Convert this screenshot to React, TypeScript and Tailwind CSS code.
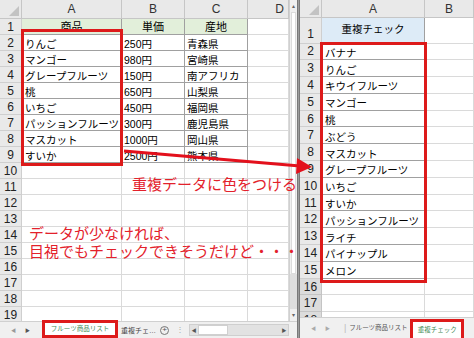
import React from "react"

const font = "font-['Liberation_Sans','Noto_Sans_CJK_JP',sans-serif]"

const leftRows: [string, string, string][] = [
  ["りんご", "250円", "青森県"],
  ["マンゴー", "980円", "宮崎県"],
  ["グレープフルーツ", "150円", "南アフリカ"],
  ["桃", "650円", "山梨県"],
  ["いちご", "450円", "福岡県"],
  ["パッションフルーツ", "300円", "鹿児島県"],
  ["マスカット", "1000円", "岡山県"],
  ["すいか", "2500円", "熊本県"],
]

const rightRows = [
  "バナナ",
  "りんご",
  "キウイフルーツ",
  "マンゴー",
  "桃",
  "ぶどう",
  "マスカット",
  "グレープフルーツ",
  "いちご",
  "すいか",
  "パッションフルーツ",
  "ライチ",
  "パイナップル",
  "メロン",
]

function Corner() {
  return (
    <div className="relative bg-[#e9e9e9] border-r border-b border-[#c6c6c6]">
      <div className="absolute right-[2px] bottom-[2px] w-0 h-0 border-l-[10px] border-l-transparent border-b-[10px] border-b-[#c3c3c3]" />
    </div>
  )
}

function ColHead({ label, right }: { label: string; right?: boolean }) {
  return (
    <div
      className={`flex items-center ${right ? "justify-end pr-[4px]" : "justify-center"} bg-[#e9e9e9] border-r border-b border-[#c6c6c6] text-[12px] text-[#333]`}
    >
      {label}
    </div>
  )
}

function RowHead({ n }: { n: number }) {
  return (
    <div className="flex items-center justify-center bg-[#e9e9e9] border-r border-b border-[#cfcfcf] text-[12px] leading-none text-[#222]">
      {n}
    </div>
  )
}

function LeftPane() {
  return (
    <div className="flex flex-col w-[297px] h-full">
      <div className="flex h-[321px] overflow-hidden">
        <div className="grid grid-cols-[22px_100px_63px_63px_41px] grid-rows-[19px_repeat(19,16px)] w-[289px] bg-white">
          <Corner />
          <ColHead label="A" />
          <ColHead label="B" />
          <ColHead label="C" />
          <ColHead label="D" right />
          <RowHead n={1} />
          {["商品", "単価", "産地"].map((t) => (
            <div
              key={t}
              className="flex items-end justify-center pb-[1px] bg-[#e2efda] border-r border-b border-[#a0a0a0] text-[11px] leading-none text-black"
            >
              {t}
            </div>
          ))}
          <div className="border-r border-b border-[#dadada]" />
          {leftRows.map((r, i) => (
            <React.Fragment key={i}>
              <RowHead n={i + 2} />
              {r.map((t, j) => (
                <div
                  key={j}
                  className={`flex items-end ${j === 0 ? "pl-[3px]" : "pl-[2px]"} pb-[1px] border-r border-b border-[#a0a0a0] text-[10.5px] leading-none text-black whitespace-nowrap overflow-hidden`}
                >
                  {t}
                </div>
              ))}
              <div className="border-r border-b border-[#dadada]" />
            </React.Fragment>
          ))}
          {Array.from({ length: 10 }).map((_, i) => (
            <React.Fragment key={i}>
              <RowHead n={i + 10} />
              <div className="border-r border-b border-[#dadada]" />
              <div className="border-r border-b border-[#dadada]" />
              <div className="border-r border-b border-[#dadada]" />
              <div className="border-r border-b border-[#dadada]" />
            </React.Fragment>
          ))}
        </div>
        <div className="flex flex-col w-[8px] bg-[#f0f0f0] border-l border-[#d0d0d0]">
          <div className="flex items-center justify-center h-[12px] text-[6px] leading-none text-[#666]">▴</div>
          <div className="h-[262px] mx-[1px] bg-white border border-[#dcdcdc]" />
          <div className="flex-1 bg-[#dedede]" />
          <div className="flex items-center justify-center h-[12px] text-[6px] leading-none text-[#666]">▾</div>
        </div>
      </div>
      <div className="flex items-stretch h-[17px] bg-[#f0f0f0] border-t border-[#d0d0d0] text-[6.5px] leading-none">
        <div className="flex items-center gap-[9px] w-[42px] pl-[11px] text-[5px] text-[#9a9a9a]">
          <span>◀</span>
          <span className="text-[#555]">▶</span>
        </div>
        <div className="flex items-center justify-center w-[76px] h-[18px] -mt-[2px] bg-white border-[3px] border-[#dd1a1a] text-[#3f8a56] whitespace-nowrap">
          フルーツ商品リスト
        </div>
        <div className="flex items-center pl-[3px] w-[42px] text-[7px] text-[#444] whitespace-nowrap overflow-hidden">
          重複チェ…
        </div>
        <div className="flex items-center">
          <span className="flex items-center justify-center w-[9px] h-[9px] rounded-full border border-[#777] text-[8px] text-[#555]">
            +
          </span>
        </div>
        <div className="flex items-center pl-[7px] pr-[5px] text-[8px] text-[#aaa]">⋮</div>
        <div className="flex items-center flex-1 my-[2px] bg-[#e2e2e2] border border-[#cfcfcf]">
          <span className="w-[8px] text-center text-[5px] text-[#555]">◀</span>
          <span className="w-[30px] h-full bg-white border border-[#d0d0d0]" />
          <span className="flex-1" />
          <span className="w-[8px] text-center text-[5px] text-[#555]">▶</span>
        </div>
        <div className="w-[8px]" />
      </div>
    </div>
  )
}

function RightPane() {
  return (
    <div className="flex flex-col flex-1 h-full">
      <div className="h-[317px] overflow-hidden">
        <div className="grid grid-cols-[22px_103px_49px] grid-rows-[18px_25.5px_repeat(17,16.8px)] bg-white">
          <Corner />
          <ColHead label="A" />
          <ColHead label="B" />
          <div className="flex items-end justify-center pb-[3px] bg-[#e9e9e9] border-r border-b border-[#cfcfcf] text-[12px] leading-none text-[#222]">
            1
          </div>
          <div className="flex items-center justify-center bg-[#ddebf7] border-r border-b border-[#a0a0a0] text-[10.5px] text-black">
            重複チェック
          </div>
          <div className="border-r border-b border-[#dadada]" />
          {rightRows.map((t, i) => (
            <React.Fragment key={i}>
              <RowHead n={i + 2} />
              <div className="flex items-end pl-[3px] pb-[1px] border-r border-b border-[#a0a0a0] text-[10.5px] leading-none text-black whitespace-nowrap">
                {t}
              </div>
              <div className="border-r border-b border-[#dadada]" />
            </React.Fragment>
          ))}
          {[16, 17, 18].map((n) => (
            <React.Fragment key={n}>
              <div className="flex items-center justify-center bg-[#dcdcdc] border-r border-b border-[#c4c4c4] text-[12px] leading-none text-[#222]">
                {n}
              </div>
              <div className="border-r border-b border-[#dadada]" />
              <div className="border-r border-b border-[#dadada]" />
            </React.Fragment>
          ))}
        </div>
      </div>
      <div className="flex items-stretch flex-1 bg-[#f0f0f0] border-t border-[#d0d0d0] text-[6.5px] leading-none">
        <div className="flex items-center gap-[9px] w-[44px] pl-[11px] text-[5px] text-[#aaa]">
          <span>◀</span>
          <span>▶</span>
        </div>
        <div className="flex items-center text-[9px] text-[#bbb]">|</div>
        <div className="flex items-center justify-center w-[64px] text-[#555] whitespace-nowrap">
          フルーツ商品リスト
        </div>
        <div className="flex items-center justify-center w-[54px] mt-[1px] bg-white border-[3px] border-b-0 border-[#dd1a1a] text-[#3f8a56] whitespace-nowrap">
          重複チェック
        </div>
      </div>
    </div>
  )
}

export default function App() {
  return (
    <div className={`relative flex w-[474px] h-[338px] overflow-hidden bg-white ${font}`}>
      <LeftPane />
      <div className="w-[3px] bg-[#9c9c9c] border-x border-[#7a7a7a]" />
      <RightPane />

      {/* annotations */}
      <div className="absolute left-[21px] top-[29px] w-[102px] h-[137px] border-[3px] border-[#dd1a1a] pointer-events-none" />
      <div className="absolute left-[320px] top-[42px] w-[107px] h-[241px] border-[3px] border-[#dd1a1a] pointer-events-none" />
      <svg className="absolute left-0 top-0 pointer-events-none" width="474" height="338">
        <line x1="124" y1="151" x2="300" y2="166" stroke="#e3101c" strokeWidth="3" />
        <polygon points="312,167 297,158 296,174" fill="#e3101c" />
      </svg>
      <div className="absolute left-[132px] top-[174px] text-[15px] leading-[20px] text-[#e3212b] whitespace-nowrap font-['Noto_Sans_CJK_JP',sans-serif]">
        重複データに色をつける
      </div>
      <div className="absolute left-[29px] top-[224px] text-[15px] leading-[18px] text-[#e3212b] whitespace-nowrap font-['Noto_Sans_CJK_JP',sans-serif]">
        データが少なければ、
        <br />
        目視でもチェックできそうだけど・・・
      </div>
    </div>
  )
}
